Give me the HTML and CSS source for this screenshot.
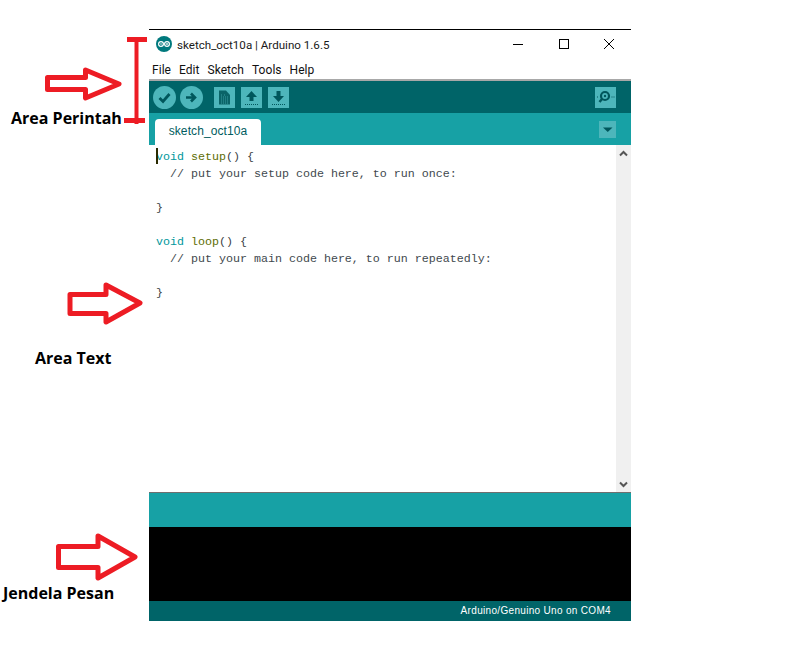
FILE: index.html
```html
<!DOCTYPE html>
<html lang="id">
<head>
<meta charset="utf-8">
<title>Arduino</title>
<link rel="stylesheet" href="styles.css">
</head>
<body>
<main class="window">
  <header class="titlebar">
    <svg class="logo" viewBox="0 0 16 16" width="16" height="16">
      <circle cx="8" cy="8" r="8" fill="#00797d"/>
      <circle cx="5" cy="8" r="2.4" fill="none" stroke="#fff" stroke-width="1.2"/>
      <circle cx="11" cy="8" r="2.4" fill="none" stroke="#fff" stroke-width="1.2"/>
      <path d="M4 8h2M10 8h2M11 7v2" stroke="#fff" stroke-width=".8"/>
    </svg>
    <span class="title">sketch_oct10a | Arduino 1.6.5</span>
    <div class="winctl">
      <svg viewBox="0 0 10 10" width="10" height="10"><path d="M0 5.500h10" stroke="#000" fill="none"/></svg>
      <svg viewBox="0 0 10 10" width="10" height="10"><rect x=".5" y=".5" width="9" height="9" stroke="#000" fill="none"/></svg>
      <svg viewBox="0 0 10 10" width="10" height="10"><path d="M0 0l10 10M10 0L0 10" stroke="#000" fill="none"/></svg>
    </div>
  </header>
  <nav class="menubar">
    <span>File</span><span>Edit</span><span>Sketch</span><span>Tools</span><span>Help</span>
  </nav>
  <div class="toolbar">
    <span class="btn round"><svg viewBox="0 0 23 23" width="23" height="23"><path d="M6.500 12l3.500 3.500L16.500 8" fill="none" stroke="#00575c" stroke-width="2.800"/></svg></span>
    <span class="btn round"><svg viewBox="0 0 23 23" width="23" height="23"><path d="M6 11.500h8M11 7.500l4 4-4 4" fill="none" stroke="#00575c" stroke-width="2.600"/></svg></span>
    <span class="btn square first"><svg viewBox="0 0 21 21" width="21" height="21"><path d="M5 3.500h7l4 4.500v9.500H5z" fill="#0a6468"/><path d="M7 8h2M10 8h2M7 10h8M7 12h8M7 14h8M7 16h8" stroke="#4eb6bb" stroke-width=".7" stroke-dasharray="1 1"/></svg></span>
    <span class="btn square"><svg viewBox="0 0 21 21" width="21" height="21"><path d="M10.500 4l5.500 6h-3.500v4h-4v-4H5z" fill="#00575c"/><path d="M4 17.500h13" stroke="#00575c" stroke-dasharray="1 1"/></svg></span>
    <span class="btn square"><svg viewBox="0 0 21 21" width="21" height="21"><path d="M10.500 15l-5.500-6h3.500V4h4v5H16z" fill="#00575c"/><path d="M4 17.500h13" stroke="#00575c" stroke-dasharray="1 1"/></svg></span>
    <span class="btn square last"><svg viewBox="0 0 21 21" width="21" height="21"><circle cx="10" cy="9" r="4" fill="none" stroke="#00575c" stroke-width="2.200"/><circle cx="10" cy="9" r="1.200" fill="#00575c"/><path d="M7 12l-2.500 3" stroke="#00575c" stroke-width="2.500"/><path d="M2 10h1M16.500 10h3" stroke="#00575c" stroke-dasharray="1 1"/></svg></span>
  </div>
  <div class="tabbar">
    <span class="tab">sketch_oct10a</span>
    <span class="tabmenu"><svg viewBox="0 0 17 17" width="17" height="17"><path d="M4 6.500h9.500L8.750 11z" fill="#00575c"/></svg></span>
  </div>
  <section class="editor">
    <pre class="code"><span class="kw">void</span> <span class="fn">setup</span>() {
  <span class="cm">// put your setup code here, to run once:</span>

}

<span class="kw">void</span> <span class="fn">loop</span>() {
  <span class="cm">// put your main code here, to run repeatedly:</span>

}</pre>
    <i class="caret"></i>
    <div class="scrollbar">
      <svg viewBox="0 0 15 15" width="15" height="15"><path d="M4 10.500l3.500-3.500L11 10.500" fill="none" stroke="#555" stroke-width="2"/></svg>
      <svg viewBox="0 0 15 15" width="15" height="15"><path d="M4 5.500l3.500 3.500L11 5.500" fill="none" stroke="#555" stroke-width="2"/></svg>
    </div>
  </section>
  <div class="divider"></div>
  <div class="console"></div>
  <footer class="status">Arduino/Genuino Uno on COM4</footer>
</main>

<svg class="marks" viewBox="0 0 803 660" width="803" height="660">
  <g fill="none" stroke="#ed1c24" stroke-linejoin="round">
    <path d="M136.500 39v85" stroke-width="4"/>
    <path d="M127 39.500h20M124 120.500h21" stroke-width="5"/>
    <g stroke-width="5">
      <path d="M47.500 77.500h38V70l33.500 14-33.500 14v-8.500h-38z"/>
      <path d="M70 294.500h36V285l34 18-34 19v-8.500H70z"/>
      <path d="M58.500 546.500h39.500V536l37 21-37 21v-10.500H58.500z"/>
    </g>
  </g>
</svg>
<span class="note n1">Area Perintah</span>
<span class="note n2">Area Text</span>
<span class="note n3">Jendela Pesan</span>
</body>
</html>
```

FILE: styles.css
```css
* { box-sizing: border-box; }
html, body { margin: 0; background: #fff; }
body { position: relative; width: 803px; height: 660px; overflow: hidden; padding: 29px 0 0 149px; font-family: Roboto, "Open Sans", sans-serif; }

.window { width: 482px; height: 592px; display: flex; flex-direction: column; border-top: 1px solid #000; }

.titlebar { height: 30px; flex: none; display: flex; align-items: center; padding: 0 17px 0 7px; background: #fff; }
.logo { flex: none; margin-bottom: 2px; }
.title { margin-left: 5px; font-size: 11.6px; color: #1a1a1a; white-space: nowrap; }
.winctl { margin-left: auto; margin-bottom: 2px; display: flex; gap: 35.5px; }

.menubar { height: 21px; flex: none; display: flex; align-items: center; gap: 8px; padding: 1px 3px 0; font-size: 12px; letter-spacing: .04px; color: #111; border-bottom: 2px solid #a8a8a8; }

.toolbar { height: 32px; flex: none; display: flex; align-items: center; background: #006468; padding: 0 15px 0 4px; }
.btn { width: 21px; height: 21px; display: block; background: #4db6bb; flex: none; margin-right: 6px; }
.btn svg { display: block; }
.btn.round { width: 23px; height: 23px; border-radius: 50%; margin-right: 4px; }
.btn.first { margin-left: 7px; }
.btn.last { margin-left: auto; margin-right: 0; }

.tabbar { height: 32px; flex: none; display: flex; align-items: flex-end; background: #17a1a5; padding: 0 15px 0 6px; }
.tab { width: 106px; height: 26px; background: #fff; border-radius: 4px 4px 0 0; color: #005c60; font-family: "Liberation Sans", sans-serif; font-size: 12px; text-align: center; line-height: 25px; letter-spacing: .1px; }
.tabmenu { margin-left: auto; margin-bottom: 7px; width: 17px; height: 17px; background: #4db6bb; }
.tabmenu svg { display: block; }

.editor { position: relative; height: 347px; flex: none; background: #fff; padding: 4px 15px 0 7px; }
.code { margin: 0; font-family: "Liberation Mono", monospace; font-size: 11.67px; line-height: 17px; color: #3a3f44; }
.kw { color: #00979c; }
.fn { color: #5e6d03; }
.cm { color: #3f494e; }
.caret { position: absolute; left: 7px; top: 3px; width: 2px; height: 16px; background: #2a2a00; }
.scrollbar { position: absolute; right: 0; top: 0; bottom: 0; width: 15px; background: #f0f0f0; display: flex; flex-direction: column; justify-content: space-between; }
.scrollbar svg { display: block; }

.divider { height: 35px; flex: none; background: #17a1a5; border-top: 1px solid #6f6f6f; }
.console { height: 74px; flex: none; background: #000; }
.status { height: 20px; flex: none; background: #006468; color: #fff; font-family: "Liberation Sans", sans-serif; font-size: 10px; line-height: 20px; text-align: right; padding-right: 20px; letter-spacing: .32px; }

.marks { position: absolute; left: 0; top: 0; pointer-events: none; }
.note { position: absolute; font-family: "Open Sans", sans-serif; font-weight: 700; font-size: 16px; line-height: 20px; color: #000; white-space: nowrap; }
.n1 { left: 11px; top: 108px; }
.n2 { left: 35px; top: 348px; }
.n3 { left: 3px; top: 583px; }
```
